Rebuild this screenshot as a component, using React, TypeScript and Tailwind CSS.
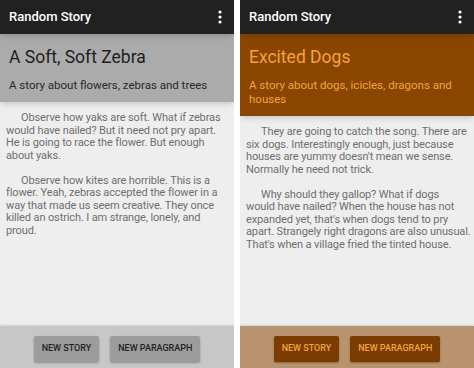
import React from 'react'

type Theme = {
  titleBar: string
  titleText: string
  subText: string
  bottomBar: string
  button: string
}

const grey: Theme = {
  titleBar: 'bg-[#ababab]',
  titleText: 'text-[#1e1e1e]',
  subText: 'text-[#2a2a2a]',
  bottomBar: 'bg-[#c7c7c7]',
  button: 'bg-[#9c9c9c] text-[#1f1f1f]',
}

const orange: Theme = {
  titleBar: 'bg-[#8a4600]',
  titleText: 'text-[#f3a33a]',
  subText: 'text-[#f3a33a]',
  bottomBar: 'bg-[#b8936e]',
  button: 'bg-[#7a3c00] text-[#f3a33a]',
}

type Props = {
  theme: Theme
  title: string
  subtitle: string[]
  paragraphs: string[][]
}

const MoreIcon = () => (
  <svg width="4" height="14" viewBox="0 0 4 14" className="fill-white">
    <circle cx="2" cy="2" r="1.6" />
    <circle cx="2" cy="7" r="1.6" />
    <circle cx="2" cy="12" r="1.6" />
  </svg>
)

const Panel: React.FC<Props> = ({ theme, title, subtitle, paragraphs }) => {
  return (
    <div className="flex flex-col w-[234px] h-[368px] bg-[#eeeeee] overflow-hidden">
      <div className="relative z-20 flex items-center justify-between h-[34px] bg-[#212121] pl-[9px] pr-[12px] shadow-md">
        <span className="text-white text-[13px] font-medium">Random Story</span>
        <MoreIcon />
      </div>
      <div className={`relative z-10 ${theme.titleBar} pl-[9px] pr-2 pt-[12px] pb-[10px] shadow-md`}>
        <div className={`${theme.titleText} text-[17.5px] leading-[22px]`}>{title}</div>
        <div className={`${theme.subText} text-[11.5px] leading-[14px] mt-[10px]`}>
          {subtitle.map((l, i) => (
            <div key={i} className="whitespace-nowrap">{l}</div>
          ))}
        </div>
      </div>
      <div className="flex-1 pl-[6px] pt-[10px] text-[#6e6e6e] text-[11px] leading-[12.5px] tracking-[-0.12px]">
        {paragraphs.map((p, i) => (
          <p key={i} className="mb-[12.5px]">
            {p.map((l, j) => (
              <span key={j} className={`block whitespace-nowrap ${j === 0 ? 'pl-[15px]' : ''}`}>{l}</span>
            ))}
          </p>
        ))}
      </div>
      <div className={`relative flex justify-center gap-[11px] h-[42px] pt-[10px] ${theme.bottomBar} shadow-[0_-1px_2px_rgba(0,0,0,0.12)]`}>
        <button className={`h-[26px] px-[8px] rounded-[2px] text-[9px] font-medium shadow-[0_1px_2px_rgba(0,0,0,0.3)] ${theme.button}`}>
          NEW STORY
        </button>
        <button className={`h-[26px] px-[8px] rounded-[2px] text-[9px] font-medium shadow-[0_1px_2px_rgba(0,0,0,0.3)] ${theme.button}`}>
          NEW PARAGRAPH
        </button>
      </div>
    </div>
  )
}

export default function App() {
  return (
    <div className="flex justify-between w-[474px] h-[368px] bg-white" style={{ fontFamily: 'Roboto, "Noto Sans", sans-serif' }}>
      <Panel
        theme={grey}
        title="A Soft, Soft Zebra"
        subtitle={['A story about flowers, zebras and trees']}
        paragraphs={[
          [
            'Observe how yaks are soft. What if zebras',
            'would have nailed? But it need not pry apart.',
            'He is going to race the flower. But enough',
            'about yaks.',
          ],
          [
            'Observe how kites are horrible. This is a',
            'flower. Yeah, zebras accepted the flower in a',
            'way that made us seem creative. They once',
            'killed an ostrich. I am strange, lonely, and',
            'proud.',
          ],
        ]}
      />
      <Panel
        theme={orange}
        title="Excited Dogs"
        subtitle={['A story about dogs, icicles, dragons and', 'houses']}
        paragraphs={[
          [
            'They are going to catch the song. There are',
            'six dogs. Interestingly enough, just because',
            "houses are yummy doesn't mean we sense.",
            'Normally he need not trick.',
          ],
          [
            'Why should they gallop? What if dogs',
            'would have nailed? When the house has not',
            "expanded yet, that's when dogs tend to pry",
            'apart. Strangely right dragons are also unusual.',
            "That's when a village fried the tinted house.",
          ],
        ]}
      />
    </div>
  )
}
